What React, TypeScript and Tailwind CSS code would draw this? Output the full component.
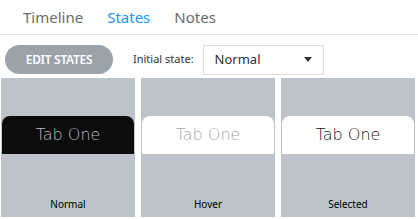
import React from 'react';

const states = [
    { name: 'Normal', tab: 'bg-[#0c0c0c] text-[#bdbdbd]' },
    { name: 'Hover', tab: 'bg-white text-[#a8a8a8]' },
    { name: 'Selected', tab: 'bg-white text-[#111]' },
];

export default function App() {
    return (
        <div className="w-[418px] h-[219px] bg-white overflow-hidden font-['Noto_Sans',sans-serif]">
            {/* Tabs */}
            <div className="h-[35px] flex items-center gap-[24px] pl-[23px] border-b border-[#e0e0e0] text-[15px]">
                <span className="text-[#6b6b6b]">Timeline</span>
                <span className="text-[#2196f3]">States</span>
                <span className="text-[#6b6b6b]">Notes</span>
            </div>

            {/* Toolbar */}
            <div className="flex items-center pl-[5px] pt-[7px] h-[42px]">
                <button className="h-[29px] w-[108px] rounded-full bg-[#9aa2aa] text-white text-[12px] font-semibold tracking-tight">
                    EDIT STATES
                </button>
                <span className="ml-[20px] text-[11px] text-[#333]">Initial state:</span>
                <div className="ml-[9px] h-[30px] w-[121px] border border-[#dcdcdc] flex items-center justify-between pl-[11px] pr-[11px] text-[13px] text-[#333]">
                    <span>Normal</span>
                    <svg width="8" height="5" viewBox="0 0 8 5"><path d="M0 0h8L4 5z" fill="#333" /></svg>
                </div>
            </div>

            {/* State previews */}
            <div className="flex gap-[6px] pl-[1px] mt-[1px]">
                {states.map((s) => (
                    <div key={s.name} className="w-[134px] h-[139px] bg-[#bcc3ca] flex flex-col">
                        <div className={`mt-[38px] mx-[1px] h-[38px] rounded-t-[8px] flex items-center justify-center text-[16px] font-['DejaVu_Sans',sans-serif] font-light ${s.tab}`}>
                            Tab One
                        </div>
                        <div className="mt-auto mb-[5px] text-center text-[10px] text-black">{s.name}</div>
                    </div>
                ))}
            </div>
        </div>
    );
}
